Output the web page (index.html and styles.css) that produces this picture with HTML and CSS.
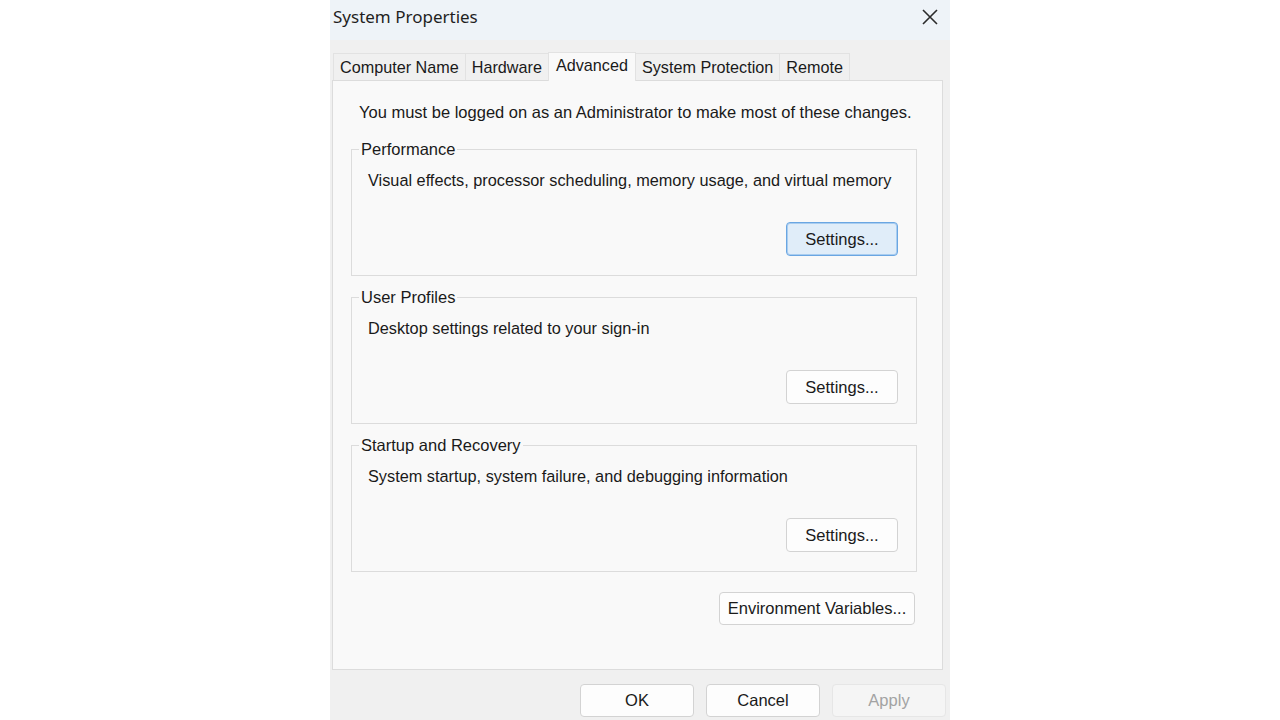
FILE: index.html
```html
<!DOCTYPE html>
<html lang="en">
<head>
    <meta charset="UTF-8">
    <title>System Properties</title>
    <link rel="stylesheet" href="styles.css">
</head>
<body>
    <div class="dialog">
        <!-- Заголовок окна -->
        <div class="titlebar">
            <span class="title">System Properties</span>
            <svg class="close" width="16" height="16" viewBox="0 0 16 16">
                <path d="M1 1 L15 15 M15 1 L1 15" stroke="#2b2b2b" stroke-width="1.6" fill="none"/>
            </svg>
        </div>

        <div class="tabs">
            <div class="tab">Computer Name</div>
            <div class="tab">Hardware</div>
            <div class="tab active">Advanced</div>
            <div class="tab">System Protection</div>
            <div class="tab">Remote</div>
        </div>

        <div class="panel">
            <p class="note">You must be logged on as an Administrator to make most of these changes.</p>

            <fieldset class="group">
                <legend>Performance</legend>
                <p class="desc">Visual effects, processor scheduling, memory usage, and virtual memory</p>
                <div class="row"><button class="btn focused">Settings...</button></div>
            </fieldset>

            <fieldset class="group">
                <legend>User Profiles</legend>
                <p class="desc">Desktop settings related to your sign-in</p>
                <div class="row"><button class="btn">Settings...</button></div>
            </fieldset>

            <fieldset class="group">
                <legend>Startup and Recovery</legend>
                <p class="desc">System startup, system failure, and debugging information</p>
                <div class="row"><button class="btn">Settings...</button></div>
            </fieldset>

            <div class="env-row"><button class="btn env">Environment Variables...</button></div>
        </div>

        <!-- Кнопки внизу -->
        <div class="footer">
            <button class="btn foot">OK</button>
            <button class="btn foot">Cancel</button>
            <button class="btn foot disabled">Apply</button>
        </div>
    </div>
</body>
</html>
```

FILE: styles.css
```css
/* Окно свойств системы */
body {
    margin: 0;
    background-color: #fff;
    font-family: "Liberation Sans", Arial, sans-serif;
    font-size: 16.5px;
    color: #1a1a1a;
}
.dialog {
    width: 620px;
    height: 720px;
    margin: 0 auto;
    background-color: #f0f0f0;
    display: flex;
    flex-direction: column;
    overflow: hidden;
}
.titlebar {
    height: 40px;
    flex: none;
    background-color: #eef3f8;
    display: flex;
    align-items: center;
    justify-content: space-between;
    padding: 0 12px 0 3px;
}
.title {
    font-family: "Noto Sans", sans-serif;
    font-size: 17px;
    color: #1f1f1f;
    margin-top: -7px;
}
.close {
    margin-top: -6px;
}
.tabs {
    display: flex;
    align-items: flex-end;
    height: 29px;
    margin-top: 11px;
    padding-left: 3px;
    position: relative;
    z-index: 1;
    font-size: 16.2px;
}
.tab {
    height: 26px;
    line-height: 26px;
    padding: 0 6px;
    border: 1px solid #e2e2e2;
    border-bottom: none;
    border-left: none;
    background-color: #f0f0f0;
    color: #1a1a1a;
}
.tab:first-child {
    border-left: 1px solid #e2e2e2;
}
.tab.active {
    height: 28px;
    line-height: 25px;
    background-color: #f9f9f9;
    border-left: 1px solid #e2e2e2;
    margin-left: -1px;
    margin-bottom: -1px;
    padding: 0 7px;
}
.panel {
    height: 590px;
    box-sizing: border-box;
    margin: 0 7px 0 2px;
    background-color: #f9f9f9;
    border: 1px solid #dcdcdc;
    padding: 22px 25px 0 18px;
    flex: none;
}
.note {
    margin: 0 0 19px 8px;
    line-height: 18px;
    white-space: nowrap;
}
.group {
    margin: 0 0 12px 0;
    padding: 13px 18px 19px 16px;
    border: 1px solid #dcdcdc;
    min-width: 0;
}
.group legend {
    padding: 0 2px;
    margin-left: -9px;
    line-height: 18px;
}
.desc {
    margin: 0;
    line-height: 18px;
    white-space: nowrap;
    font-size: 16.3px;
}
.row {
    display: flex;
    justify-content: flex-end;
    margin-top: 33px;
}
.btn {
    font-family: "Liberation Sans", Arial, sans-serif;
    font-size: 16.5px;
    color: #1a1a1a;
    background-color: #fdfdfd;
    border: 1px solid #d3d3d3;
    border-radius: 4px;
    height: 34px;
    width: 112px;
    padding: 0;
}
.btn.focused {
    background-color: #e0edf9;
    border: 1px solid #6aa6e2;
    box-shadow: inset 0 0 0 1px #a9cdf0;
}
.env-row {
    display: flex;
    justify-content: flex-end;
    margin-top: 20px;
    padding-right: 2px;
}
.btn.env {
    width: 196px;
    height: 33px;
}
.footer {
    display: flex;
    justify-content: flex-end;
    gap: 12px;
    padding: 14px 4px 0 0;
}
.btn.foot {
    width: 114px;
    height: 33px;
}
.btn.disabled {
    background-color: #f5f5f5;
    border-color: #e6e6e6;
    color: #a3a3a3;
}
```
